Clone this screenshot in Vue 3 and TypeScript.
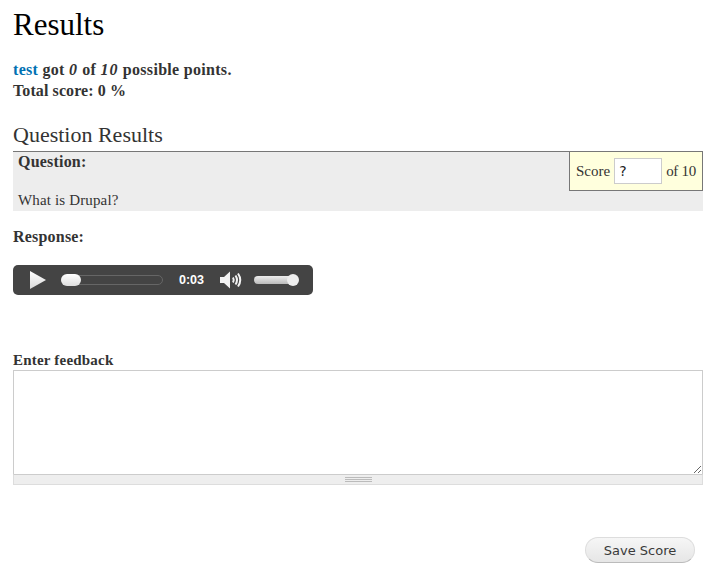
<script setup lang="ts">
const student: string = 'test'
</script>

<template>
  <main class="page">
    <h1 class="title">Results</h1>
    <p class="summary">
      <a class="link" href="#">{{ student }}</a> got <em>0</em> of <em>10</em> possible points.<br />
      <span class="total">Total score: 0 %</span>
    </p>
    <h2 class="subtitle">Question Results</h2>
    <section class="question">
      <div class="score">
        <label for="score">Score</label>
        <input id="score" class="score-input" value="?" />
        <span class="score-max">of 10</span>
      </div>
      <strong class="q-label">Question:</strong>
      <p class="q-text">What is Drupal?</p>
    </section>
    <strong class="response">Response:</strong>
    <div class="player">
      <svg class="play" width="18" height="20" viewBox="0 0 18 20">
        <defs>
          <linearGradient id="pg" x1="0" y1="0" x2="0" y2="1">
            <stop offset="0" stop-color="#ffffff" />
            <stop offset="1" stop-color="#d8d8d8" />
          </linearGradient>
        </defs>
        <path d="M1 1 L17 10 L1 19 Z" fill="url(#pg)" />
      </svg>
      <div class="track"><div class="knob"></div></div>
      <span class="time">0:03</span>
      <svg class="speaker" width="24" height="20" viewBox="0 0 24 20">
        <path d="M0 7 H4 L10 1.5 V18.5 L4 13 H0 Z" fill="#f2f2f2" />
        <path d="M13 7.5 Q14.5 10 13 12.5 M15.5 5.5 Q18.5 10 15.5 14.5 M18 3.5 Q22.5 10 18 16.5" fill="none" stroke="#f2f2f2" stroke-width="2" />
      </svg>
      <div class="volume"><div class="vol-knob"></div></div>
    </div>
    <label class="fb-label" for="fb">Enter feedback</label>
    <textarea id="fb" class="feedback"></textarea>
    <div class="grippie"><div class="grip"></div></div>
    <div class="actions">
      <button class="save" type="button">Save Score</button>
    </div>
  </main>
</template>

<style>
html, body { margin: 0; background: #fff; }
</style>

<style scoped>
.page {
  box-sizing: border-box;
  width: 714px;
  height: 586px;
  padding: 0 11px 0 13px;
  overflow: hidden;
  font-family: "Liberation Serif", "DejaVu Serif", serif;
  font-size: 15px;
  letter-spacing: 0.15px;
  color: #333;
}
.title {
  margin: 0;
  padding-top: 8px;
  font-size: 31px;
  line-height: 34px;
  font-weight: 400;
  letter-spacing: 0;
  color: #000;
}
.summary {
  margin: 17px 0 0;
  font-size: 16px;
  line-height: 21px;
  font-weight: 700;
  letter-spacing: 0.3px;
}
.summary em { letter-spacing: 1px; }
.total { letter-spacing: 0.1px; }
.link { color: #0071b3; text-decoration: none; }
.subtitle {
  margin: 21px 0 3px;
  font-size: 22px;
  line-height: 26px;
  font-weight: 400;
  letter-spacing: 0;
}
.question {
  position: relative;
  box-sizing: border-box;
  height: 60px;
  border-top: 1px solid #777;
  background: #ededed;
  padding: 0 5px;
  line-height: 20px;
}
.q-label { display: block; font-size: 16px; letter-spacing: 0.2px; }
.q-text { margin: 18px 0 0; }
.score {
  position: absolute;
  top: -1px;
  right: 0;
  box-sizing: border-box;
  width: 134px;
  height: 40px;
  border: 1px solid #777;
  background: #ffffdd;
  display: flex;
  align-items: center;
  gap: 4px;
  padding: 0 0 0 6px;
  white-space: nowrap;
  letter-spacing: 0;
}
.score-input {
  box-sizing: border-box;
  width: 48px;
  height: 26px;
  border: 1px solid #ccc;
  padding: 0 4px;
  font-family: "DejaVu Sans", sans-serif;
  font-size: 14px;
  color: #222;
  outline: none;
}
.score-max { letter-spacing: -0.3px; }
.response { display: block; margin-top: 16px; line-height: 20px; font-size: 16px; letter-spacing: 0.2px; }
.player {
  box-sizing: border-box;
  width: 300px;
  height: 30px;
  margin-top: 18px;
  border-radius: 5px;
  background: #444;
  display: flex;
  align-items: center;
  padding-left: 16px;
  letter-spacing: 0;
}
.play { flex: none; }
.track {
  position: relative;
  box-sizing: border-box;
  width: 102px;
  height: 10px;
  margin-left: 14px;
  border: 1px solid #666;
  border-radius: 5px;
}
.knob {
  position: absolute;
  left: -1px;
  top: -2px;
  width: 20px;
  height: 12px;
  border-radius: 6px;
  background: linear-gradient(#fff, #ddd);
}
.time {
  margin-left: 16px;
  width: 26px;
  font-family: "Liberation Sans", sans-serif;
  font-size: 12.5px;
  font-weight: 700;
  color: #fff;
}
.speaker { margin-left: 15px; flex: none; }
.volume {
  position: relative;
  width: 44px;
  height: 8px;
  margin-left: 10px;
  border-radius: 4px;
  background: linear-gradient(#eee, #bbb);
}
.vol-knob {
  position: absolute;
  right: -1px;
  top: -2px;
  width: 12px;
  height: 12px;
  border-radius: 50%;
  background: #eee;
}
.fb-label { display: block; margin-top: 55px; line-height: 20px; font-weight: 700; letter-spacing: 0.2px; }
.feedback {
  display: block;
  box-sizing: border-box;
  width: 690px;
  height: 105px;
  border: 1px solid #ccc;
  padding: 4px;
  margin: 0;
}
.grippie {
  box-sizing: border-box;
  width: 690px;
  height: 11px;
  margin-top: -1px;
  border: 1px solid #ddd;
  border-top-color: #ccc;
  background: #eee;
  display: flex;
  justify-content: center;
  align-items: center;
}
.grip {
  width: 27px;
  height: 5px;
  border-top: 1px solid #bbb;
  border-bottom: 1px solid #bbb;
  background: linear-gradient(#eee 1px, #bbb 1px, #bbb 2px, #eee 2px);
  box-sizing: border-box;
}
.actions { display: flex; justify-content: flex-end; padding: 52px 8px 0 0; }
.save {
  box-sizing: border-box;
  width: 110px;
  height: 26px;
  border: 1px solid #ddd;
  border-bottom-color: #bbb;
  border-radius: 13px;
  background: linear-gradient(#f6f6f6, #e6e6e6);
  font-family: "DejaVu Sans", sans-serif;
  font-size: 13px;
  color: #3a3a3a;
  padding: 0;
  letter-spacing: 0;
}
</style>
